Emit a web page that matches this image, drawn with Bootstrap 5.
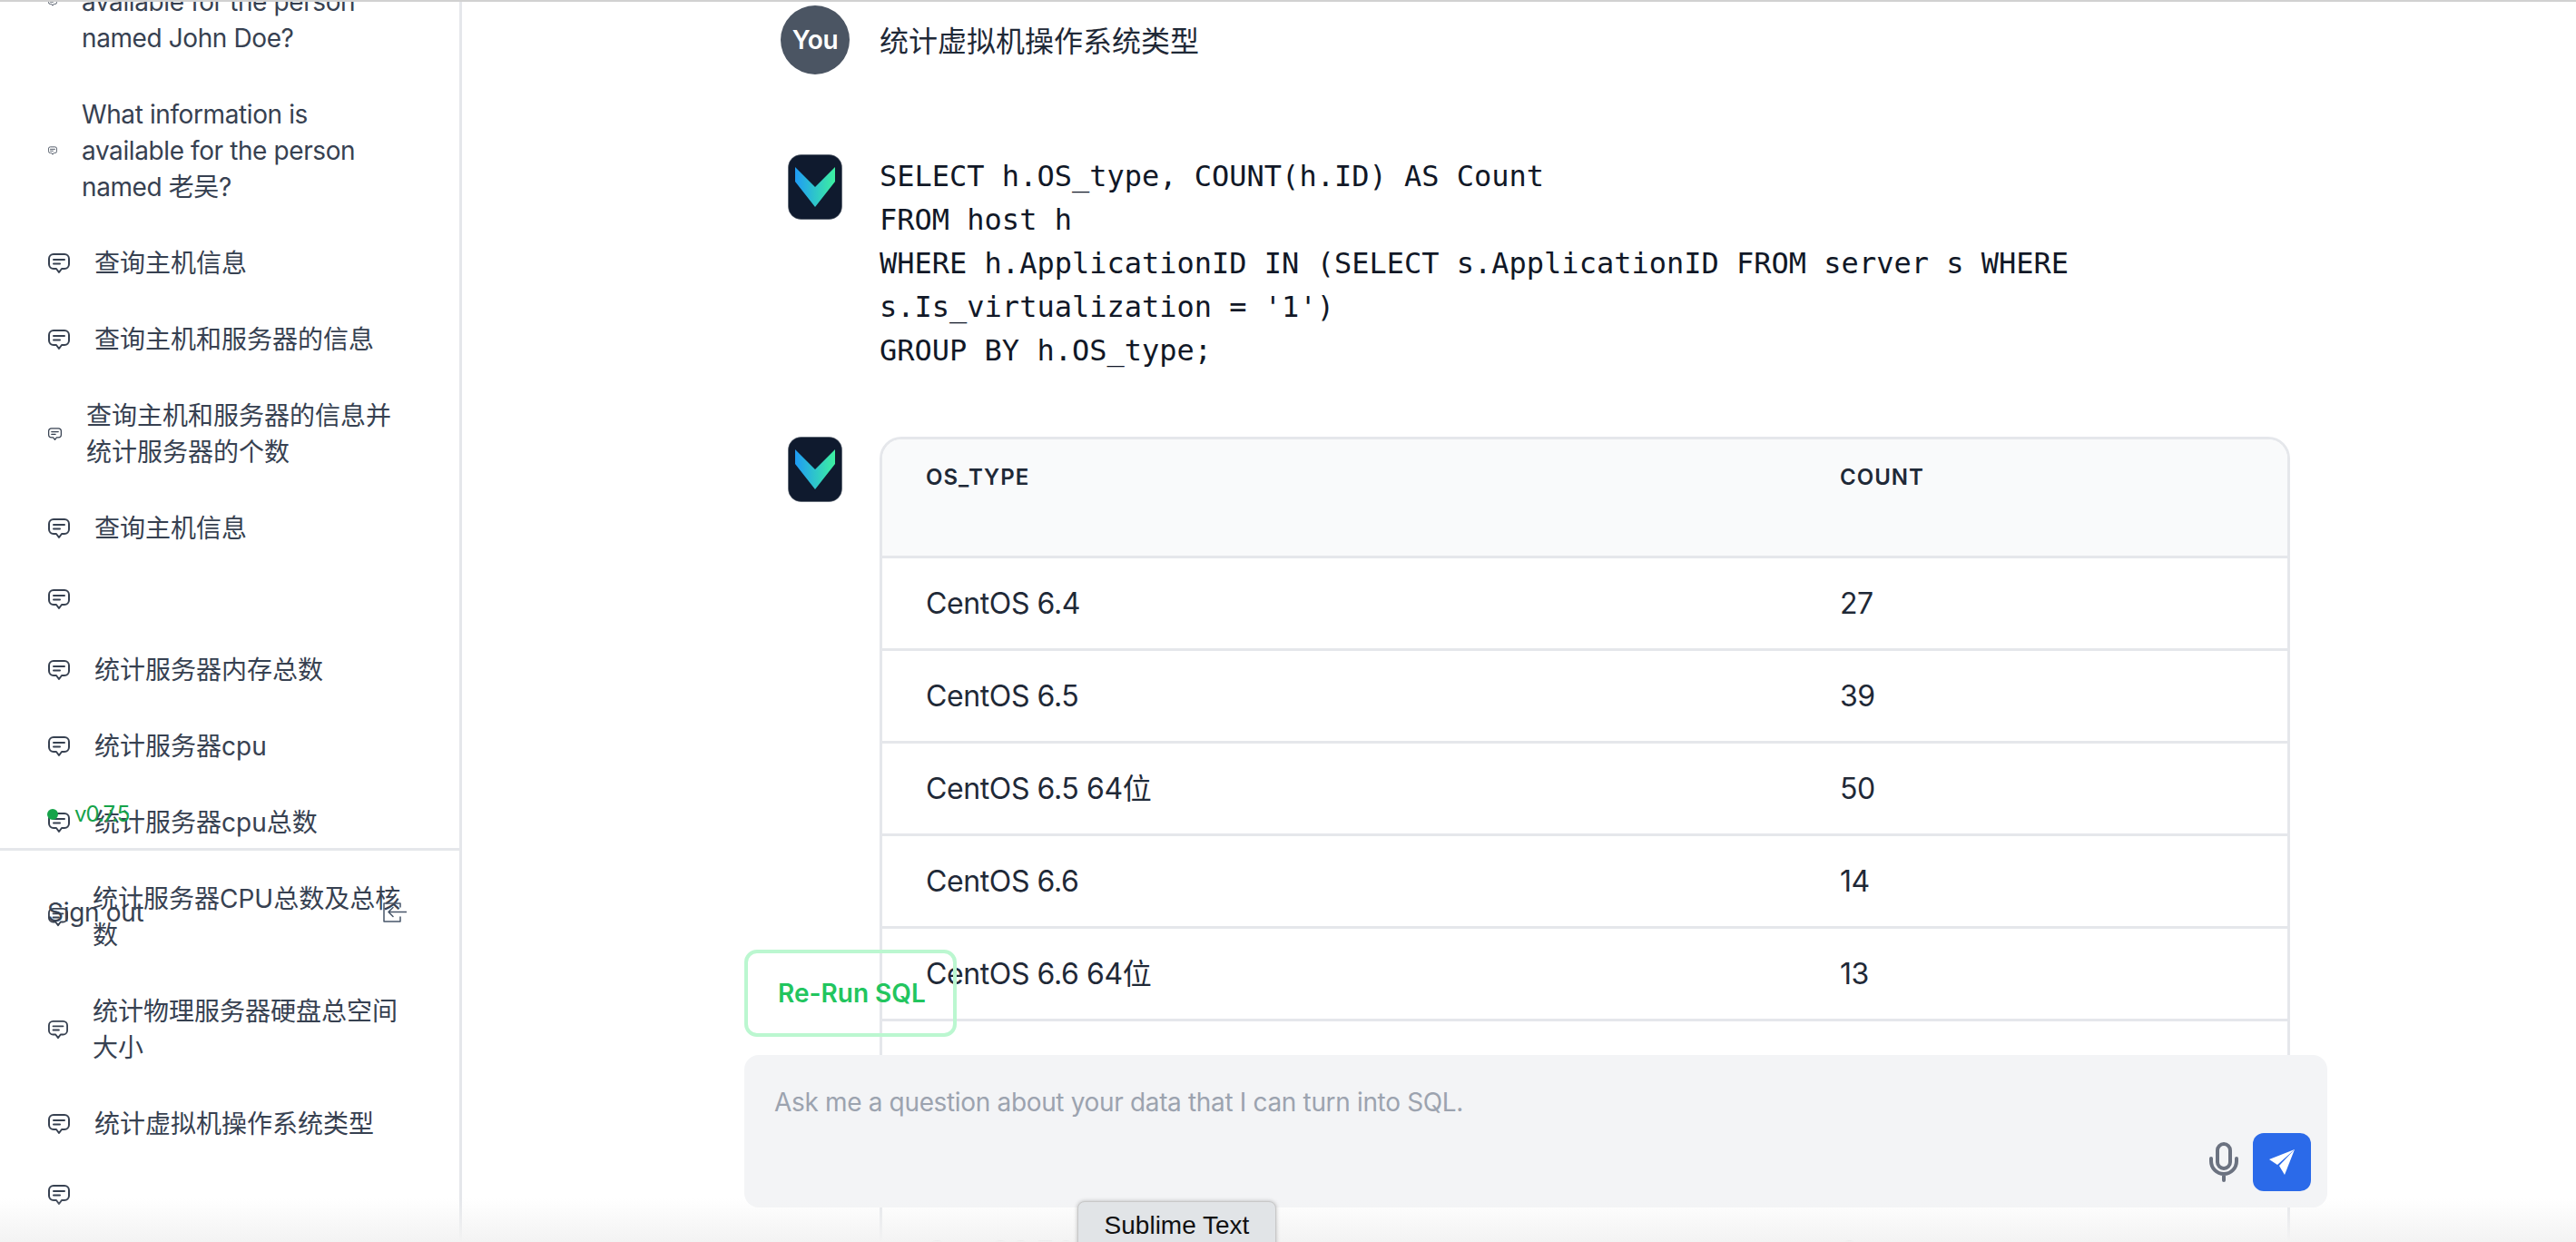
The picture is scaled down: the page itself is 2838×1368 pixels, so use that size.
<!DOCTYPE html>
<html lang="zh">
<head>
    <meta charset="UTF-8">
    <meta name="viewport" content="width=device-width, initial-scale=1">
    <title>Vanna</title>
    <link href="https://cdn.jsdelivr.net/npm/bootstrap@5.3.0/dist/css/bootstrap.min.css" rel="stylesheet">
    <style>
        html, body {
            height: 100%;
            overflow: hidden;
        }
        body {
            font-family: Inter, "Noto Sans CJK SC", sans-serif;
            color: #1f2937;
            background: #fff;
        }
        .app-shell {
            height: 1368px;
            overflow: hidden;
            border-top: 2px solid #d1d1d1;
        }
        /* sidebar */
        .side-panel {
            width: 509px;
            flex: none;
            border-right: 3px solid #e5e7eb;
            overflow: hidden;
        }
        .chat-list {
            margin-top: -82px;
        }
        .chat-item {
            padding: 22px 60px 22px 53px;
            gap: 27px;
            font-size: 28px;
            line-height: 40px;
            color: #374151;
        }
        .latin-text {
            letter-spacing: -.4px;
        }
        .chat-ico {
            width: 24px;
            height: 28px;
            flex: none;
        }
        .chat-ico.w12 { width: 10px; }
        .chat-ico.w16 { width: 15px; }
        .chat-ico.w22 { width: 22px; }
        .side-foot {
            left: 0;
            top: 872px;
            width: 506px;
        }
        .version-row {
            padding: 0 0 14px 52px;
            height: 60px;
            gap: 18px;
            font-size: 24px;
            letter-spacing: -1px;
            color: #16a34a;
        }
        .green-dot {
            width: 12px;
            height: 12px;
            background: #16a34a;
            border-radius: 50%;
        }
        .signout-row {
            border-top: 3px solid #e5e7eb;
            padding: 48px 58px 0 52px;
            font-size: 28px;
            line-height: 40px;
            letter-spacing: -.3px;
            color: #374151;
        }
        /* main column */
        .main-col {
            width: 1655px;
            margin-left: 359px;
        }
        .msg-row {
            gap: 41px;
        }
        .you-row {
            gap: 33px;
        }
        .you-avatar {
            width: 76px;
            height: 76px;
            margin-top: 4px;
            margin-left: -8px;
            background: #4b5563;
            color: #fff;
            font-size: 28px;
            font-weight: 600;
            letter-spacing: -.3px;
            flex: none;
        }
        .bot-logo {
            width: 60px;
            height: 72px;
            flex: none;
        }
        .you-text {
            font-size: 32px;
            line-height: 48px;
            padding-top: 20px;
        }
        .sql-block {
            margin-top: 88px;
        }
        .table-block {
            margin-top: 71px;
        }
        .sql-text {
            font-family: "DejaVu Sans Mono", monospace;
            font-size: 32px;
            line-height: 48px;
            color: #111827;
            white-space: pre-wrap;
            margin: 0;
        }
        .result-box {
            border: 3px solid #e5e7eb;
            border-bottom: 0;
            border-radius: 24px 24px 0 0;
            overflow: hidden;
        }
        .result-table {
            width: 100%;
            table-layout: fixed;
            margin: 0;
        }
        .result-table th {
            height: 129px;
            padding: 27px 0 0 48px;
            vertical-align: top;
            background: #f9fafb;
            border-bottom: 3px solid #e5e7eb;
            font-size: 24px;
            font-weight: 600;
            line-height: 30px;
            letter-spacing: 1px;
            color: #1f2937;
        }
        .result-table td {
            height: 102px;
            padding: 2px 0 0 48px;
            border-bottom: 3px solid #e5e7eb;
            font-size: 32px;
            letter-spacing: -.4px;
            color: #1f2937;
        }
        .first-col {
            width: 1007px;
        }
        /* overlays */
        .rerun-btn {
            left: 820px;
            top: 1044px;
            width: 234px;
            height: 96px;
            padding: 0 0 0 33px;
            text-align: left;
            background: transparent;
            border: 4px solid #bbf7d0;
            border-radius: 14px;
            color: #22c55e;
            font-size: 28px;
            font-weight: 600;
        }
        .ask-box {
            left: 820px;
            top: 1160px;
            width: 1744px;
            height: 168px;
            background: #f3f4f6;
            border-radius: 16px;
            padding: 32px 18px 18px 33px;
            font-size: 28px;
            line-height: 40px;
            letter-spacing: -.34px;
            color: #9ca3af;
        }
        .ask-tools {
            right: 18px;
            bottom: 18px;
            gap: 16px;
        }
        .send-btn {
            width: 64px;
            height: 64px;
            padding: 0;
            background: #2b6ae9;
            border: 0;
            border-radius: 12px;
        }
        .bottom-fade {
            left: 0;
            right: 0;
            bottom: 0;
            height: 48px;
            background: linear-gradient(to bottom, rgba(243,243,243,0), #f3f3f3);
            pointer-events: none;
        }
        .dock-tip {
            left: 1187px;
            top: 1321px;
            width: 219px;
            height: 60px;
            background: #e1e4e7;
            border: 1px solid #c8c8c8;
            border-radius: 8px 8px 0 0;
            box-shadow: 0 0 4px rgba(0,0,0,.25);
            padding-top: 6px;
            text-align: center;
            font-family: "Liberation Sans", sans-serif;
            font-size: 28px;
            line-height: 40px;
            color: #111;
        }
    </style>
</head>
<body>
<svg width="0" height="0" class="position-absolute">
    <defs>
        <symbol id="bubble" viewBox="0 0 24 24">
            <path d="M6 2h12a5 5 0 0 1 5 5v6a5 5 0 0 1-5 5h-3l-3 4-3-4H6a5 5 0 0 1-5-5V7a5 5 0 0 1 5-5z" fill="none" stroke="#374151" stroke-width="2" stroke-linejoin="round"/>
            <path d="M6 8h12M6 12.500h7" fill="none" stroke="#374151" stroke-width="2" stroke-linecap="round"/>
        </symbol>
        <linearGradient id="vgrad" x1="0" y1="0" x2="1" y2="0">
            <stop offset="0" stop-color="#1f9bf5"/>
            <stop offset="1" stop-color="#3df0a0"/>
        </linearGradient>
        <symbol id="vlogo" viewBox="0 0 60 72">
            <rect x=".5" y=".5" width="59" height="71" rx="14" fill="#0f1a2e" stroke="#4b5563" stroke-opacity=".6"/>
            <path d="M8 14l22 22 22-22v16L30 58 8 30z" fill="url(#vgrad)"/>
        </symbol>
    </defs>
</svg>
<div class="app-shell d-flex position-relative">
    <!-- Sidebar -->
    <aside class="side-panel">
        <div class="chat-list">
            <div class="chat-item d-flex align-items-center"><svg class="chat-ico w12"><use href="#bubble"/></svg><span class="latin-text">What information is available for the person named John Doe?</span></div>
            <div class="chat-item d-flex align-items-center"><svg class="chat-ico w12"><use href="#bubble"/></svg><span class="latin-text">What information is available for the person named 老吴?</span></div>
            <div class="chat-item d-flex align-items-center"><svg class="chat-ico"><use href="#bubble"/></svg><span>查询主机信息</span></div>
            <div class="chat-item d-flex align-items-center"><svg class="chat-ico"><use href="#bubble"/></svg><span>查询主机和服务器的信息</span></div>
            <div class="chat-item d-flex align-items-center"><svg class="chat-ico w16"><use href="#bubble"/></svg><span>查询主机和服务器的信息并统计服务器的个数</span></div>
            <div class="chat-item d-flex align-items-center"><svg class="chat-ico"><use href="#bubble"/></svg><span>查询主机信息</span></div>
            <div class="chat-item d-flex align-items-center"><svg class="chat-ico"><use href="#bubble"/></svg></div>
            <div class="chat-item d-flex align-items-center"><svg class="chat-ico"><use href="#bubble"/></svg><span>统计服务器内存总数</span></div>
            <div class="chat-item d-flex align-items-center"><svg class="chat-ico"><use href="#bubble"/></svg><span>统计服务器cpu</span></div>
            <div class="chat-item d-flex align-items-center"><svg class="chat-ico"><use href="#bubble"/></svg><span>统计服务器cpu总数</span></div>
            <div class="chat-item d-flex align-items-center"><svg class="chat-ico w22"><use href="#bubble"/></svg><span>统计服务器CPU总数及总核数</span></div>
            <div class="chat-item d-flex align-items-center"><svg class="chat-ico w22"><use href="#bubble"/></svg><span>统计物理服务器硬盘总空间大小</span></div>
            <div class="chat-item d-flex align-items-center"><svg class="chat-ico"><use href="#bubble"/></svg><span>统计虚拟机操作系统类型</span></div>
            <div class="chat-item d-flex align-items-center"><svg class="chat-ico"><use href="#bubble"/></svg></div>
        </div>
    </aside>
    <div class="side-foot position-absolute">
        <div class="version-row d-flex align-items-center"><span class="green-dot"></span><span>v0.7.5</span></div>
        <div class="signout-row d-flex justify-content-between align-items-center">
            <span>Sign out</span>
            <svg width="26" height="22" viewBox="0 0 26 22" fill="none" stroke="#475569" stroke-width="1.5" stroke-linecap="round" stroke-linejoin="round">
                <path d="M19 5V1H1v20h18v-5"/>
                <path d="M26 10.500H6M11 5.500l-5 5 5 5"/>
            </svg>
        </div>
    </div>

    <!-- Chat -->
    <main class="main-col">
        <div class="you-row d-flex">
            <div class="you-avatar rounded-circle d-flex align-items-center justify-content-center">You</div>
            <div class="you-text">统计虚拟机操作系统类型</div>
        </div>
        <div class="msg-row sql-block d-flex">
            <svg class="bot-logo"><use href="#vlogo"/></svg>
            <pre class="sql-text flex-grow-1">SELECT h.OS_type, COUNT(h.ID) AS Count
FROM host h
WHERE h.ApplicationID IN (SELECT s.ApplicationID FROM server s WHERE s.Is_virtualization = '1')
GROUP BY h.OS_type;</pre>
        </div>
        <div class="msg-row table-block d-flex">
            <svg class="bot-logo"><use href="#vlogo"/></svg>
            <div class="result-box flex-grow-1">
                <table class="result-table">
                    <thead>
                        <tr><th class="first-col">OS_TYPE</th><th>COUNT</th></tr>
                    </thead>
                    <tbody>
                        <tr><td>CentOS 6.4</td><td>27</td></tr>
                        <tr><td>CentOS 6.5</td><td>39</td></tr>
                        <tr><td>CentOS 6.5 64位</td><td>50</td></tr>
                        <tr><td>CentOS 6.6</td><td>14</td></tr>
                        <tr><td>CentOS 6.6 64位</td><td>13</td></tr>
                        <tr><td>CentOS 6.7</td><td>8</td></tr>
                        <tr><td>CentOS 6.8</td><td>5</td></tr>
                        <tr><td>CentOS 7.0</td><td>6</td></tr>
                    </tbody>
                </table>
            </div>
        </div>
    </main>

    <button type="button" class="rerun-btn btn position-absolute">Re-Run SQL</button>

    <div class="ask-box position-absolute">
        Ask me a question about your data that I can turn into SQL.
        <div class="ask-tools position-absolute d-flex align-items-center">
            <svg width="32" height="44" viewBox="0 0 32 44" fill="none" stroke="#6b7280" stroke-width="4" stroke-linecap="round">
                <rect x="9" y="2" width="14" height="27" rx="7"/>
                <path d="M2 18v3a14 14 0 0 0 28 0v-3M16 35v7"/>
            </svg>
            <button type="button" class="send-btn btn d-flex align-items-center justify-content-center">
                <svg width="28" height="28" viewBox="0 0 28 28" fill="#fff">
                    <path d="M0 11L28 0 9 17z"/>
                    <path d="M28 0L11 18l6 10z"/>
                </svg>
            </button>
        </div>
    </div>

    <div class="bottom-fade position-absolute"></div>
    <div class="dock-tip position-absolute">Sublime Text</div>
</div>
</body>
</html>
